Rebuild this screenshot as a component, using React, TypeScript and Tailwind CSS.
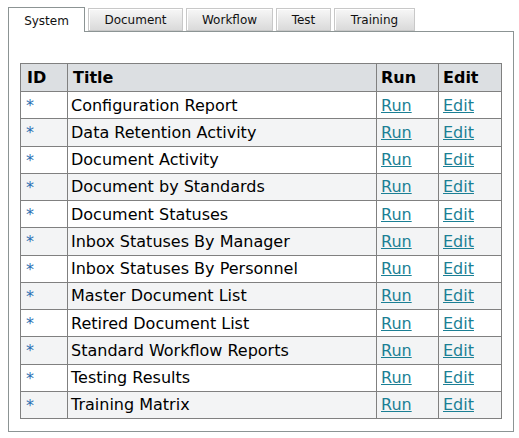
const tabs = ["System", "Document", "Workflow", "Test", "Training"];
const tabWidths = ["w-[77px]", "w-[95px]", "w-[87px]", "w-[55px]", "w-[81px]"];

const reports = [
  "Configuration Report",
  "Data Retention Activity",
  "Document Activity",
  "Document by Standards",
  "Document Statuses",
  "Inbox Statuses By Manager",
  "Inbox Statuses By Personnel",
  "Master Document List",
  "Retired Document List",
  "Standard Workflow Reports",
  "Testing Results",
  "Training Matrix",
];

export default function App() {
  return (
    <div className="w-[519px] h-[438px] bg-white pl-[8px] pt-[7px] font-['DejaVu_Sans',Verdana,sans-serif] text-black">
      <div className="flex items-end gap-[3px]">
        {tabs.map((t, i) =>
          i === 0 ? (
            <div
              key={t}
              className={`${tabWidths[i]} relative z-10 -mb-px flex h-[25px] items-center justify-center border border-b-0 border-[#8c9494] bg-white pt-[1px] text-[12px] text-[#111]`}
            >
              {t}
            </div>
          ) : (
            <div
              key={t}
              className={`${tabWidths[i]} flex h-[23px] items-center justify-center border border-[#c8c8c8] bg-gradient-to-b from-[#f7f7f7] to-[#dadada] text-[12px] text-[#111] shadow-[inset_1px_1px_0_#ffffff]`}
            >
              {t}
            </div>
          )
        )}
      </div>
      <div className="w-[506px] h-[401px] border border-[#8c9494] px-[11px] pt-[31px]">
        <table className="w-[481px] table-fixed border-collapse">
          <colgroup>
            <col className="w-[47px]" />
            <col className="w-[309px]" />
            <col className="w-[62px]" />
            <col className="w-[63px]" />
          </colgroup>
          <thead>
            <tr className="h-[28px] bg-[#dcdfe2]">
              <th className="border border-[#808080] pl-[6px] pt-[1px] text-left text-[16px] font-bold">ID</th>
              <th className="border border-[#808080] pl-[5px] pt-[1px] text-left text-[16px] font-bold">Title</th>
              <th className="border border-[#808080] pl-[4px] pt-[1px] text-left text-[16px] font-bold">Run</th>
              <th className="border border-[#808080] pl-[4px] pt-[1px] text-left text-[16px] font-bold">Edit</th>
            </tr>
          </thead>
          <tbody>
            {reports.map((r, i) => (
              <tr key={r} className={`h-[27.25px] text-[16px] ${i % 2 === 0 ? "bg-white" : "bg-[#f3f4f5]"}`}>
                <td className="border border-[#808080] pl-[5px] align-top pt-[2px] text-[#2b6fb3]">*</td>
                <td className="border border-[#808080] pl-[3px] pt-[1px]">{r}</td>
                <td className="border border-[#808080] pl-[4px] pt-[1px]">
                  <a href="#" className="text-[#1b7f94] underline">Run</a>
                </td>
                <td className="border border-[#808080] pl-[4px] pt-[1px]">
                  <a href="#" className="text-[#1b7f94] underline">Edit</a>
                </td>
              </tr>
            ))}
          </tbody>
        </table>
      </div>
    </div>
  );
}
